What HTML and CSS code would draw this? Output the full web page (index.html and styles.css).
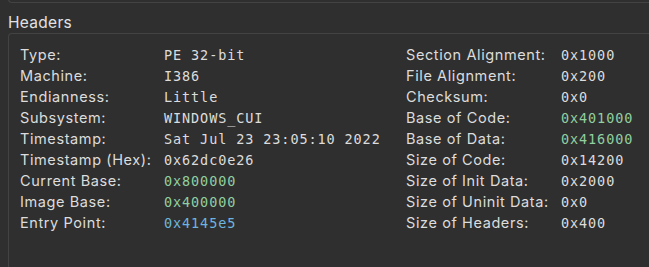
FILE: index.html
```html
<!DOCTYPE html>
<html>
<head>
<meta charset="utf-8">
<link rel="stylesheet" href="styles.css">
</head>
<body>
<div class="prev-group"></div>
<div class="group-title">Headers</div>
<div class="group">
  <div class="grid">
    <span class="lbl">Type:</span><span class="val">PE 32-bit</span>
    <span class="lbl">Section Alignment:</span><span class="val">0x1000</span>

    <span class="lbl">Machine:</span><span class="val">I386</span>
    <span class="lbl">File Alignment:</span><span class="val">0x200</span>

    <span class="lbl">Endianness:</span><span class="val">Little</span>
    <span class="lbl">Checksum:</span><span class="val">0x0</span>

    <span class="lbl">Subsystem:</span><span class="val">WINDOWS_CUI</span>
    <span class="lbl">Base of Code:</span><span class="val green">0x401000</span>

    <span class="lbl">Timestamp:</span><span class="val">Sat Jul 23 23:05:10 2022</span>
    <span class="lbl">Base of Data:</span><span class="val green">0x416000</span>

    <span class="lbl">Timestamp (Hex):</span><span class="val">0x62dc0e26</span>
    <span class="lbl">Size of Code:</span><span class="val">0x14200</span>

    <span class="lbl">Current Base:</span><span class="val green">0x800000</span>
    <span class="lbl">Size of Init Data:</span><span class="val">0x2000</span>

    <span class="lbl">Image Base:</span><span class="val green">0x400000</span>
    <span class="lbl">Size of Uninit Data:</span><span class="val">0x0</span>

    <span class="lbl">Entry Point:</span><span class="val blue">0x4145e5</span>
    <span class="lbl">Size of Headers:</span><span class="val">0x400</span>
  </div>
</div>
</body>
</html>
```

FILE: styles.css
```css
html, body {
  margin: 0;
  padding: 0;
  background: #2f2f2f;
  height: 100%;
  overflow: hidden;
}
body {
  padding-left: 8px;
  font-family: Inter, "Liberation Sans", sans-serif;
  color: #dedede;
}
.prev-group {
  height: 3px;
  border-left: 1px solid #434343;
  border-bottom: 1px solid #434343;
  border-bottom-left-radius: 4px;
  margin-top: -1px;
}
.group-title {
  font-size: 15.5px;
  line-height: 20px;
  padding-top: 10px;
  height: 20px;
  color: #e2e2e2;
  letter-spacing: 0.3px;
}
.group {
  border-left: 1px solid #434343;
  border-top: 1px solid #434343;
  border-top-left-radius: 4px;
  height: 300px;
  padding: 10px 0 0 11px;
}
.grid {
  display: grid;
  grid-template-columns: 144px 242px 155px auto;
  grid-auto-rows: 21px;
  align-items: center;
}
.lbl {
  font-size: 14.5px;
  letter-spacing: 0.6px;
  color: #dcdcdc;
  white-space: nowrap;
}
.val {
  font-family: "DejaVu Sans Mono", monospace;
  font-size: 13.5px;
  letter-spacing: 0.9px;
  color: #dcdcdc;
  white-space: nowrap;
}
.green { color: #8fcfa0; }
.blue { color: #6db5de; }
```
